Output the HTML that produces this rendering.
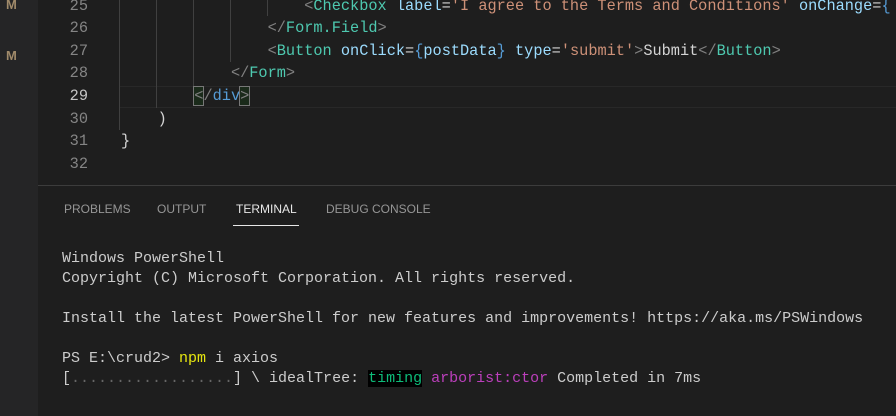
<!DOCTYPE html><html><head><style>
body{margin:0;width:896px;height:416px;background:#1e1e1e;overflow:hidden;position:relative;font-family:"Liberation Mono",monospace}
.act{position:absolute;left:0;top:0;width:38px;height:416px;background:#252526}
.m{position:absolute;left:6px;color:#a08a6a;font:bold 13px "Liberation Sans",sans-serif}
.ln{position:absolute;left:40px;width:48px;text-align:right;color:#858585;font-size:15.28px}
.code{position:absolute;left:121px;white-space:pre;font-size:15.28px;color:#d4d4d4}
.g{color:#808080}.t{color:#4ec9b0}.a{color:#9cdcfe}.s{color:#ce9178}.b{color:#569cd6}.y{color:#ffd700}
.guide{position:absolute;width:1px;background:#404040}
.tab{position:absolute;top:202px;font:12px "Liberation Sans",sans-serif;color:#969696}
.term{position:absolute;left:62px;white-space:pre;font-size:15px;color:#cccccc;line-height:20px}
</style></head><body>
<div class="act"><div class="m" style="top:-3px">M</div><div class="m" style="top:48px">M</div></div>
<div style="position:absolute;left:119px;right:0;top:86px;height:20px;border-top:1px solid #282828;border-bottom:1px solid #282828"></div>
<div class="guide" style="left:119px;top:0;height:130px"></div>
<div class="guide" style="left:156px;top:0;height:108px"></div>
<div class="guide" style="left:193px;top:0;height:86px"></div>
<div class="guide" style="left:230px;top:0;height:62px"></div>
<div class="guide" style="left:267px;top:0;height:16px"></div>
<div class="ln" style="top:-3px">25</div><div class="ln" style="top:19px">26</div><div class="ln" style="top:42px">27</div><div class="ln" style="top:64px">28</div><div class="ln" style="top:87px;color:#c6c6c6">29</div><div class="ln" style="top:110px">30</div><div class="ln" style="top:132px">31</div><div class="ln" style="top:155px">32</div>
<div class="code" style="top:-3px">                    <span class="g">&lt;</span><span class="t">Checkbox</span> <span class="a">label</span>=<span class="s">'I agree to the Terms and Conditions'</span> <span class="a">onChange</span>=<span class="b">{</span></div>
<div class="code" style="top:19px">                <span class="g">&lt;/</span><span class="t">Form.Field</span><span class="g">&gt;</span></div>
<div class="code" style="top:42px">                <span class="g">&lt;</span><span class="t">Button</span> <span class="a">onClick</span>=<span class="b">{</span><span class="a">postData</span><span class="b">}</span> <span class="a">type</span>=<span class="s">'submit'</span><span class="g">&gt;</span>Submit<span class="g">&lt;/</span><span class="t">Button</span><span class="g">&gt;</span></div>
<div class="code" style="top:64px">            <span class="g">&lt;/</span><span class="t">Form</span><span class="g">&gt;</span></div>
<div class="code" style="top:87px">        <span class="g" style="outline:1px solid #777;background:#1a2a1a">&lt;</span><span class="g">/</span><span class="b">div</span><span class="g" style="outline:1px solid #777;background:#1a2a1a">&gt;</span></div>
<div class="code" style="top:110px">    <span style="color:#d4d4d4">)</span></div>
<div class="code" style="top:132px">}</div>
<div style="position:absolute;left:38px;right:0;top:185px;height:1px;background:#3c3c3c"></div>
<div class="tab" style="left:64px">PROBLEMS</div><div class="tab" style="left:157px">OUTPUT</div><div class="tab" style="left:236px;color:#e7e7e7">TERMINAL</div><div class="tab" style="left:326px">DEBUG CONSOLE</div>
<div style="position:absolute;left:233px;top:225px;width:66px;height:1px;background:#e7e7e7"></div>
<div class="term" style="top:249px">Windows PowerShell
Copyright (C) Microsoft Corporation. All rights reserved.

Install the latest PowerShell for new features and improvements! https://aka.ms/PSWindows

PS E:\crud2&gt; <span style="color:#e5e510">npm</span> i axios
[<span style="color:#666">..................</span>] \ idealTree: <span style="color:#0dbc79;background:#000">timing</span> <span style="color:#bc3fbc">arborist:ctor</span> Completed in 7ms</div>
</body></html>
